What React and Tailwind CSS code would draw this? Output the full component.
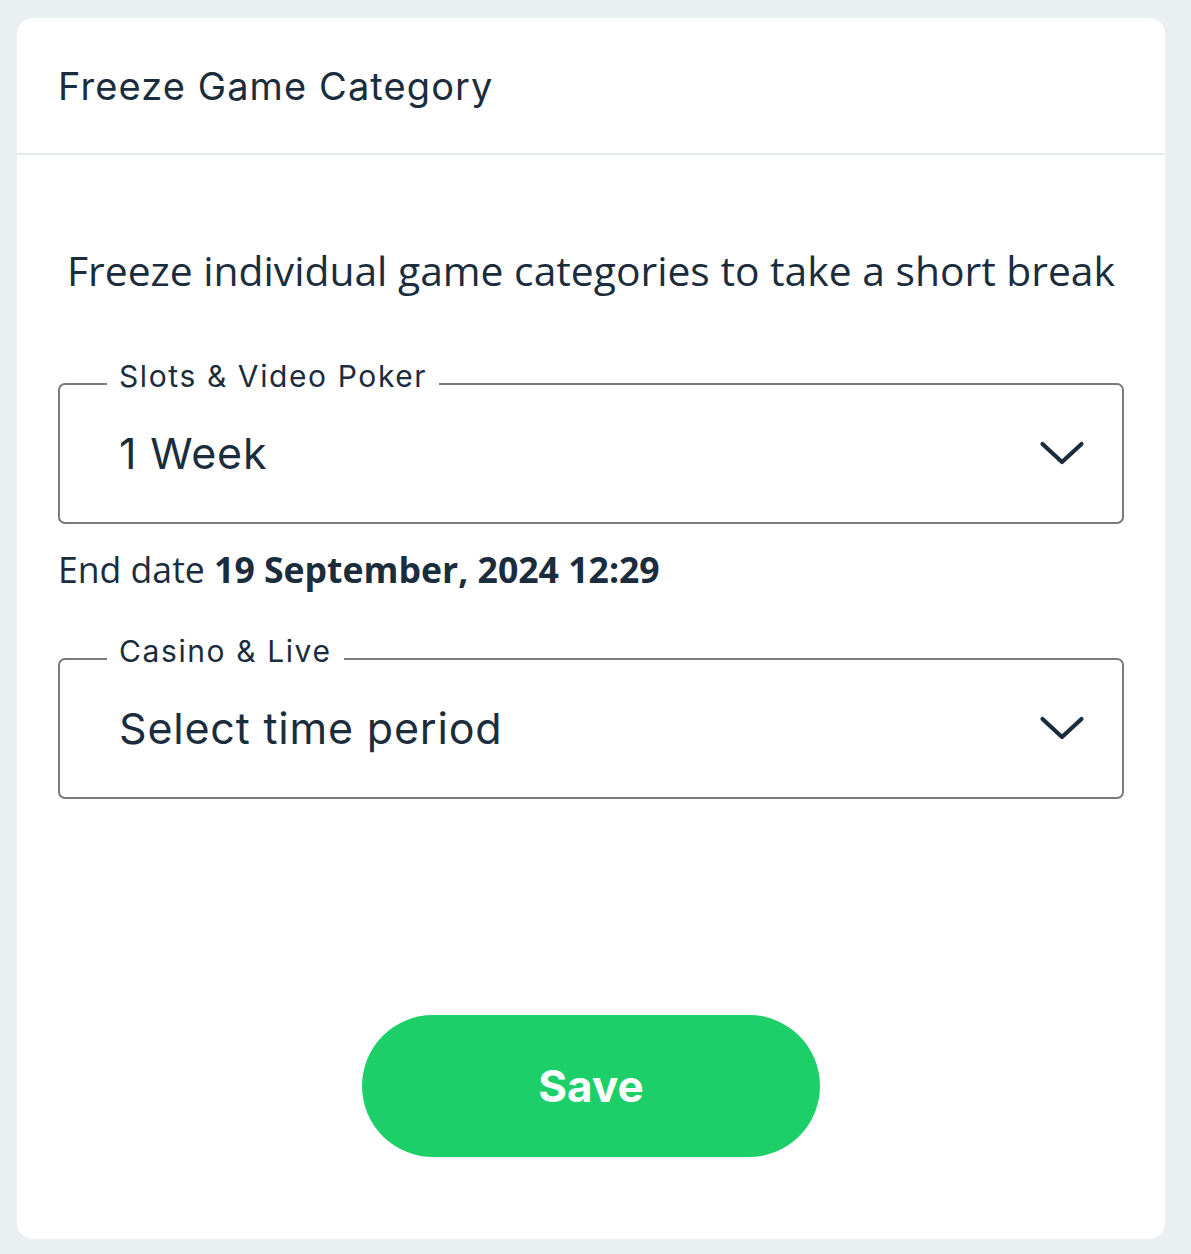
const geo = { fontFamily: "Inter, 'Noto Sans', sans-serif" };
const body = { fontFamily: "'Open Sans', sans-serif" };

function Chevron() {
  return (
    <svg width="46" height="26" viewBox="0 0 46 26" fill="none" className="text-[#1b2d3d]">
      <path
        d="M3.5 4 L23 22 L42.5 4"
        stroke="currentColor"
        strokeWidth="4.2"
        strokeLinecap="round"
        strokeLinejoin="round"
      />
    </svg>
  );
}

function OutlinedSelect({ label, value }) {
  return (
    <fieldset className="h-[166px] rounded-[7px] border-2 border-[#7a7a7a] m-0 p-0">
      <legend
        className="ml-[47px] px-[12px] pb-[16px] text-[30px] leading-[36px] tracking-[1.6px] text-[#1b2d3d]"
        style={geo}
      >
        {label}
      </legend>
      <div className="flex h-[112px] items-center justify-between pl-[59px] pr-[37px] pb-[26px]">
        <span className="text-[43px] leading-[52px] tracking-[0.8px] text-[#1b2d3d]" style={geo}>
          {value}
        </span>
        <Chevron />
      </div>
    </fieldset>
  );
}

export default function App() {
  return (
    <div className="min-h-[1254px] bg-[#eaf0f2] pt-[18px] pl-[17px]">
      <div className="w-[1148px] h-[1221px] rounded-[16px] bg-white flex flex-col">
        {/* Header */}
        <div className="h-[137px] border-b-2 border-[#e6eaec] flex items-center pl-[41px] pt-[1px]">
          <h1 className="text-[38px] font-normal tracking-[1.1px] text-[#1b2d3d]" style={geo}>
            Freeze Game Category
          </h1>
        </div>

        {/* Body */}
        <div className="px-[41px] pt-[89px] flex flex-col">
          <p className="text-center text-[40.8px] leading-[52px] text-[#1b2d3d]" style={body}>
            Freeze individual game categories to take a short break
          </p>

          <div className="mt-[62px]">
            <OutlinedSelect label="Slots & Video Poker" value="1 Week" />
          </div>

          <p className="mt-[22px] text-[35.6px] leading-[46px] text-[#1b2d3d]" style={body}>
            End date <span className="font-bold">19 September, 2024 12:29</span>
          </p>

          <div className="mt-[41px]">
            <OutlinedSelect label="Casino & Live" value="Select time period" />
          </div>

          <div className="flex justify-center mt-[216px]">
            <button
              className="w-[458px] h-[142px] rounded-full bg-[#1ccf69] text-white text-[44px] font-bold"
              style={geo}
            >
              Save
            </button>
          </div>
        </div>
      </div>
    </div>
  );
}
